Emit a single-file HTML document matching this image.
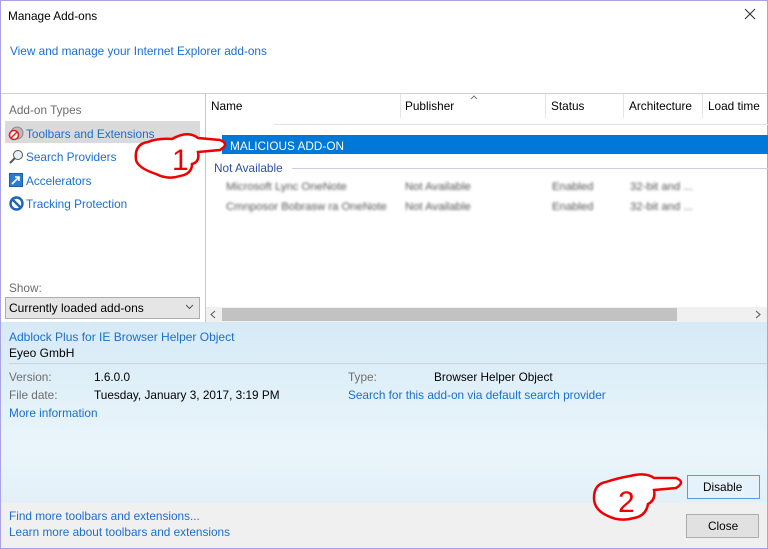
<!DOCTYPE html>
<html><head><meta charset="utf-8"><style>
body{margin:0;width:768px;height:549px;position:relative;overflow:hidden;font-family:"Liberation Sans",sans-serif;font-size:11.3px;background:#fff;color:#000}
.a{position:absolute;white-space:nowrap}
.lk{color:#1a6fd0}
.g{color:#6d6d6d}
.blur{filter:blur(1.3px);color:#555}
</style></head><body>
<div class="a" style="left:0;top:0;width:766px;height:547px;border:1px solid #a9a3e3"></div>
<div class="a" style="left:8px;top:9px;font-size:11.8px">Manage Add-ons</div>
<svg class="a" style="left:744px;top:8px" width="12" height="12"><path d="M1 1 L11 11 M11 1 L1 11" stroke="#333" stroke-width="1.1"/></svg>
<div class="a lk" style="left:10px;top:44px;font-size:11.8px">View and manage your Internet Explorer add-ons</div>
<div class="a" style="left:1px;top:93px;width:766px;height:1px;background:#d0d0d0"></div>
<!-- left pane -->
<div class="a" style="left:205px;top:94px;width:1px;height:228px;background:#c8c8c8"></div>
<div class="a g" style="left:9px;top:103px;font-size:11.8px">Add-on Types</div>
<div class="a" style="left:5px;top:121px;width:195px;height:22px;background:#dadada"></div>
<svg class="a" style="left:8px;top:125px" width="16" height="16"><circle cx="9" cy="8" r="6" fill="#bbb" stroke="#888"/><circle cx="6" cy="10" r="4.5" fill="#fff" stroke="#d22" stroke-width="1.6"/><line x1="3" y1="13" x2="9" y2="7" stroke="#d22" stroke-width="1.5"/></svg>
<div class="a lk" style="left:26px;top:127px;font-size:11.8px">Toolbars and Extensions</div>
<svg class="a" style="left:9px;top:149px" width="15" height="15"><circle cx="9" cy="6" r="4.5" fill="#e8f0f8" stroke="#555"/><line x1="6" y1="9" x2="1" y2="14" stroke="#555" stroke-width="2"/></svg>
<div class="a lk" style="left:26px;top:150px;font-size:11.8px">Search Providers</div>
<svg class="a" style="left:9px;top:173px" width="14" height="14"><rect x="0.5" y="0.5" width="13" height="13" fill="#2b7bd0" stroke="#1a5ea8"/><path d="M3 11 L10 4 M6 4 H10 V8" stroke="#fff" stroke-width="1.6" fill="none"/></svg>
<div class="a lk" style="left:26px;top:174px;font-size:11.8px">Accelerators</div>
<svg class="a" style="left:9px;top:196px" width="15" height="15"><circle cx="7.5" cy="7.5" r="6" fill="#fff" stroke="#1e64b8" stroke-width="2.4"/><line x1="3.5" y1="3.5" x2="11.5" y2="11.5" stroke="#1e64b8" stroke-width="2.4"/></svg>
<div class="a lk" style="left:26px;top:197px;font-size:11.8px">Tracking Protection</div>
<div class="a g" style="left:9px;top:281px;font-size:11.8px">Show:</div>
<div class="a" style="left:5px;top:297px;width:193px;height:20px;border:1px solid #adadad;background:#e5e5e5"></div>
<div class="a" style="left:9px;top:301px;font-size:12px">Currently loaded add-ons</div>
<svg class="a" style="left:185px;top:304px" width="9" height="6"><path d="M1 1 L4.5 4.5 L8 1" stroke="#555" fill="none"/></svg>
<!-- list -->
<div class="a" style="left:211px;top:99px;font-size:11.8px">Name</div>
<div class="a" style="left:400px;top:94px;width:1px;height:24px;background:#e5e5e5"></div>
<div class="a" style="left:405px;top:99px;font-size:11.8px">Publisher</div>
<svg class="a" style="left:470px;top:95px" width="8" height="5"><path d="M1 4 L4 1 L7 4" stroke="#777" fill="none"/></svg>
<div class="a" style="left:545px;top:94px;width:1px;height:24px;background:#e5e5e5"></div>
<div class="a" style="left:551px;top:99px;font-size:11.8px">Status</div>
<div class="a" style="left:623px;top:94px;width:1px;height:24px;background:#e5e5e5"></div>
<div class="a" style="left:629px;top:99px;font-size:11.8px">Architecture</div>
<div class="a" style="left:702px;top:94px;width:1px;height:24px;background:#e5e5e5"></div>
<div class="a" style="left:708px;top:99px;font-size:11.8px">Load time</div>
<div class="a" style="left:274px;top:124px;width:494px;height:1px;background:#dde3f0"></div>
<div class="a" style="left:222px;top:135px;width:546px;height:19px;background:#0078d7"></div>
<div class="a" style="left:230px;top:139px;color:#fff;font-size:11.8px">MALICIOUS ADD-ON</div>
<div class="a" style="left:214px;top:161px;color:#2c4fa8;font-size:11.8px">Not Available</div>
<div class="a" style="left:292px;top:168px;width:476px;height:1px;background:#c8d0e8"></div>
<div class="a blur" style="left:226px;top:181px">Microsoft Lync OneNote</div>
<div class="a blur" style="left:405px;top:181px">Not Available</div>
<div class="a blur" style="left:552px;top:181px">Enabled</div>
<div class="a blur" style="left:630px;top:181px">32-bit and ...</div>
<div class="a blur" style="left:226px;top:201px">Cmnposor Bobrasw ra OneNote</div>
<div class="a blur" style="left:405px;top:201px">Not Available</div>
<div class="a blur" style="left:552px;top:201px">Enabled</div>
<div class="a blur" style="left:630px;top:201px">32-bit and ...</div>
<div class="a" style="left:206px;top:307px;width:561px;height:15px;background:#f0f0f0"></div>
<div class="a" style="left:222px;top:308px;width:455px;height:13px;background:#c2c2c2"></div>
<svg class="a" style="left:210px;top:310px" width="6" height="9"><path d="M5 1 L1 4.5 L5 8" stroke="#555" fill="none"/></svg>
<svg class="a" style="left:755px;top:310px" width="6" height="9"><path d="M1 1 L5 4.5 L1 8" stroke="#555" fill="none"/></svg>
<!-- details -->
<div class="a" style="left:1px;top:322px;width:766px;height:181px;background:linear-gradient(#d6eaf6,#eaf5fb 70%,#e3f0f8)"></div>
<div class="a lk" style="left:9px;top:330px;font-size:12px">Adblock Plus for IE Browser Helper Object</div>
<div class="a" style="left:9px;top:346px;font-size:12px">Eyeo GmbH</div>
<div class="a" style="left:9px;top:363px;width:758px;height:1px;background:#c9d3da"></div>
<div class="a g" style="left:9px;top:370px;font-size:11.8px">Version:</div>
<div class="a" style="left:94px;top:370px;font-size:11.8px">1.6.0.0</div>
<div class="a g" style="left:9px;top:388px;font-size:11.8px">File date:</div>
<div class="a" style="left:94px;top:388px;font-size:11.8px">Tuesday, January 3, 2017, 3:19 PM</div>
<div class="a lk" style="left:9px;top:406px;font-size:11.8px">More information</div>
<div class="a g" style="left:348px;top:370px;font-size:11.8px">Type:</div>
<div class="a" style="left:434px;top:370px;font-size:11.8px">Browser Helper Object</div>
<div class="a lk" style="left:348px;top:388px;font-size:11.8px">Search for this add-on via default search provider</div>
<div class="a" style="left:687px;top:475px;width:71px;height:22px;border:1px solid #5a9ae0;background:#e5f1fb"></div>
<div class="a" style="left:703px;top:480px;font-size:11.8px">Disable</div>
<div class="a" style="left:1px;top:503px;width:766px;height:45px;background:#f0f0f0"></div>
<div class="a lk" style="left:9px;top:509px;font-size:11.8px">Find more toolbars and extensions...</div>
<div class="a lk" style="left:9px;top:525px;font-size:11.8px">Learn more about toolbars and extensions</div>
<div class="a" style="left:686px;top:514px;width:71px;height:22px;border:1px solid #adadad;background:#e1e1e1"></div>
<div class="a" style="left:708px;top:519px;font-size:11.8px">Close</div>
<!-- hands -->
<svg class="a" style="left:128px;top:124px" width="100" height="60"><path d="M44 15 Q60 6 70 14 L92 16 Q102 20 92 26 L70 28 Q72 38 64 40 Q64 50 52 52 Q40 56 28 50 Q10 44 8 36 Q6 20 20 18 Q30 14 44 15 Z" fill="#fff" stroke="#e00" stroke-width="2.5"/><text x="44" y="46" font-family="Liberation Sans" font-size="30" fill="#e00">1</text></svg>
<svg class="a" style="left:590px;top:470px" width="100" height="56"><path d="M40 6 Q56 2 64 8 L86 8 Q96 12 86 18 L64 20 Q66 30 58 34 Q56 46 44 48 Q30 52 18 46 Q4 40 4 28 Q4 14 16 12 Q28 8 40 6 Z" fill="#fff" stroke="#e00" stroke-width="2.5"/><text x="28" y="42" font-family="Liberation Sans" font-size="30" fill="#e00">2</text></svg>
</body></html>
